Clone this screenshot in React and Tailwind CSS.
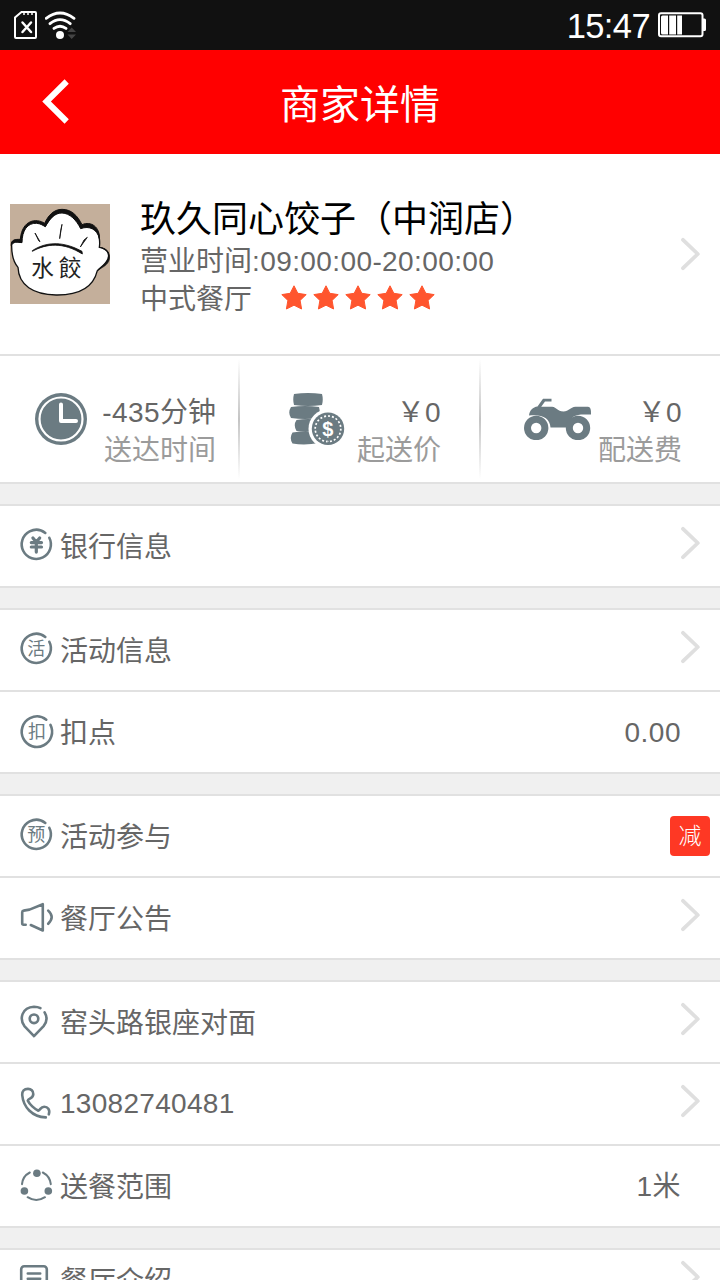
const INK = "#6b7b82";

function Chevron({ className = "" }) {
  return (
    <svg viewBox="0 0 22 36" className={`h-[36px] w-[22px] shrink-0 ${className}`} fill="none" stroke="#dfdfdf" strokeWidth="3.8" strokeLinecap="round" strokeLinejoin="round">
      <path d="M5 3.8 19.8 18 5 32.2" />
    </svg>
  );
}

function Icon({ children }) {
  return (
    <svg viewBox="0 0 34 34" className="h-[34px] w-[34px] shrink-0 overflow-visible" fill="none" stroke={INK} strokeWidth="2.6" strokeLinecap="round" strokeLinejoin="round">
      {children}
    </svg>
  );
}

function Ring({ cx = 16.3, cy = 15.4, r = 14.6, char }) {
  return (
    <Icon>
      <circle cx={cx} cy={cy} r={r} pathLength="360" strokeDasharray="335 25" transform={`rotate(-27 ${cx} ${cy})`} />
      {char ? (
        <text x={cx} y={cy + 6.6} textAnchor="middle" fontSize="18" fill={INK} stroke="none" style={{ fontFamily: '"Noto Sans CJK SC", sans-serif' }}>
          {char}
        </text>
      ) : (
        <path strokeWidth="3.2" d="M12.9 8.9l3.4 4.2 3.4-4.2M11.3 13.6h10.2M11.3 18h10.2M16.3 13.5v9.6" />
      )}
    </Icon>
  );
}

const icons = {
  bank: <Ring />,
  activity: <Ring char="活" />,
  deduct: <Ring cx={16.9} cy={16.7} r={15.2} char="扣" />,
  join: <Ring char="预" />,
  notice: (
    <Icon>
      <path d="M5.7 23.7H3.6Q2.2 23.7 2.2 22.3V11.2Q2.2 9.8 3.6 9.6L9.5 8.6 22.8 3.2V29.5L10.8 24M28.2 9.6Q35.2 16 28.2 22.8" />
    </Icon>
  ),
  place: (
    <Icon>
      <path d="M24.6 7.4C27.6 12.5 26.6 17.5 23.6 21.1L14 31.2 4.4 21.1C-.8 13.8 1.8 2.3 14 1.7Q17.8 1.7 20.4 3.2" />
      <circle cx="14" cy="13.8" r="4.3" />
    </Icon>
  ),
  phone: (
    <Icon>
      <path d="M28.8 27.3C30.4 22.5 27.6 19.7 24.2 19.7 20.6 19.7 20.7 22.5 18.4 23.7 14.5 22 9.5 17.3 7.8 13.6 8.4 11.2 13 12 13.3 7.2 13.4 3.8 11 1.9 8 1.9 4.2 1.9 2 4 2.2 8 3.3 20 12 29.8 25.8 30.4" />
    </Icon>
  ),
  range: (
    <Icon>
      <path strokeWidth="2" d="M2 15.2Q2.6 7.3 9.8 3.5M22.8 3.5Q30 7.3 30.8 15.2M7.6 28.2Q16.3 33.8 25 28.2" />
      <g fill={INK} stroke="none">
        <circle cx="16.9" cy="4.3" r="3.8" />
        <circle cx="4.4" cy="22" r="3.8" />
        <circle cx="28.3" cy="22" r="3.8" />
      </g>
    </Icon>
  ),
  intro: (
    <Icon>
      <rect x="1.2" y="3.2" width="25.6" height="27" rx="3" />
      <path d="M7.8 10.5h12.4M7.8 15.8h12.4M7.8 21.1h7" />
    </Icon>
  ),
};

function Row({ icon, label, phone, value, badge, arrow, short }) {
  return (
    <div className={`flex shrink-0 items-center bg-white pl-[20px] ${short ? "h-[60px]" : "h-[80px]"}`}>
      {icons[icon]}
      {phone ? (
        <span className="ml-[6px] flex-1 leading-[40px] tracking-[0.3px]">{phone}</span>
      ) : (
        <span className="ml-[6px] flex-1 pt-[4px] leading-[40px]">{label}</span>
      )}
      {value && <span className="mr-[39px] pt-[2px] leading-[40px] tracking-[0.5px]">{value}</span>}
      {badge && (
        <span className="mr-[10px] flex h-[40px] w-[40px] items-center justify-center rounded-[4px] bg-[#fe3824] text-[23px] font-light leading-[40px] text-white">
          {badge}
        </span>
      )}
      {arrow && <Chevron className="mr-[20px] mb-[6px]" />}
    </div>
  );
}

function Group({ children }) {
  return <section className="mb-[20px] flex shrink-0 flex-col gap-[2px] bg-[#e1e1e1] py-[2px]">{children}</section>;
}

function Stat({ icon, value, label, className }) {
  return (
    <div className={`flex h-full items-start justify-between ${className}`}>
      {icon}
      <div className="pt-[38px] text-right leading-[38px]">
        <p>{value}</p>
        <p className="tracking-normal text-[#9b9b9b]">{label}</p>
      </div>
    </div>
  );
}

const Divider = () => <div className="h-[120px] w-[2px] shrink-0 bg-linear-to-b from-white via-[#c4c4c4] to-white" />;

function Logo() {
  return (
    <svg viewBox="0 0 300 300" className="h-[100px] w-[100px] shrink-0">
      <rect width="300" height="300" fill="#c4af9b" />
      <path d="M5 117C8 108 20 112 34 115C34 80 50 54 76 54C90 54 98 60 106 66C120 40 134 24 156 24C182 24 202 44 214 70C240 58 268 74 268 104Q270 118 268 130C290 134 300 146 294 164C288 180 274 188 262 200C250 250 210 274 138 273C70 272 26 244 24 190C8 172 4 145 5 117Z" fill="#fff" stroke="#111" strokeWidth="4" strokeLinejoin="round" />
      <path d="M4 126C7 112 24 114 36 116C36 80 52 56 80 58C92 59 98 64 106 68C118 44 134 27 156 27C180 28 199 48 212 74C238 64 262 76 268 104C270 70 244 50 216 62C202 34 184 16 156 16C130 16 114 36 104 58C80 42 36 46 31 106C16 106 2 106 4 126Z" fill="#111" stroke="#111" strokeWidth="3" />
      <path d="M270 130C290 136 300 148 294 164C288 180 274 190 262 200C276 190 294 184 298 166C302 146 288 132 270 130Z" fill="#111" stroke="#111" strokeWidth="2" />
      <path d="M67 140C100 118 150 106 216 142L217 150C160 114 110 118 67 142ZM75 87L90 113 86 110ZM156 61L149 104 152 80ZM232 100L211 129 222 108Z" fill="#111" stroke="#111" strokeWidth="2.5" strokeLinejoin="round" />
      <text x="64" y="216" fontSize="68" fill="#222" textLength="150" lengthAdjust="spacing" style={{ fontFamily: '"Noto Sans CJK TC", sans-serif' }}>水餃</text>
    </svg>
  );
}

function Star() {
  return (
    <svg viewBox="0 0 26 25" className="h-[25px] w-[26px]" fill="#ff552e" stroke="#ff552e" strokeWidth="1" strokeLinejoin="round">
      <path d="M13 .8 16.8 8.3 25.2 9.6 19.1 15.4 20.6 24 13 20.2 5.4 24 6.9 15.4.8 9.6 9.2 8.3Z" />
    </svg>
  );
}

const Clock = (
  <svg viewBox="0 0 52 52" className="mt-[37px] h-[52px] w-[52px]" fill="none">
    <circle cx="26" cy="26" r="26" fill={INK} />
    <circle cx="26" cy="26" r="21.5" stroke="#fff" strokeWidth="2.2" />
    <path d="M26 11.5V28H41" stroke="#fff" strokeWidth="4" strokeLinecap="round" strokeLinejoin="round" />
  </svg>
);

const Coins = (
  <svg viewBox="0 0 58 52" className="mt-[37px] h-[52px] w-[58px]" fill={INK}>
    <path d="M6 1Q20 -1 34 1 35.5 6.500 34 12 20 14 6 12 4.500 6.500 6 1ZM3 14Q17 12 31 14 32.500 19.500 31 25 17 27 3 25 -.5 19.500 3 14ZM8.500 27Q20 25 31 27V37Q20 40 8.500 38 5 32 8.500 27ZM4.500 39.500Q17 37.500 31 39.500V50Q17 52.500 4.500 50.500 1 45 4.500 39.500Z" />
    <circle cx="40" cy="35.800" r="19.500" fill="#fff" />
    <circle cx="40" cy="35.800" r="16.200" />
    <circle cx="40" cy="35.800" r="12.800" fill="none" stroke="#fff" strokeWidth="1.700" pathLength="40" strokeDasharray="1 1" />
    <text x="40" y="43" textAnchor="middle" fontSize="20" fontWeight="700" fill="#fff" style={{ fontFamily: '"Liberation Sans", sans-serif' }}>$</text>
  </svg>
);

const Quad = (
  <svg viewBox="0 0 68 42" className="mt-[42px] h-[42px] w-[68px]" fill={INK}>
    <path d="M19 .8H27.500V3.400H21L17.200 8.700H28C33 9 33 13.500 39.500 13.500 45 13.500 46 9 51.500 8.700H64Q67.500 9 67 16.500H57C49 17 44 22 42.500 29.500H26.500C26 20 18 16 5 17.500 5.500 12 9 9 13.500 8.400Z" />
    <g fill="none" stroke={INK} strokeWidth="7">
      <circle cx="12.200" cy="30" r="8.700" />
      <circle cx="54" cy="30" r="8.700" />
    </g>
  </svg>
);

export default function App() {
  return (
    <div className="flex h-[1280px] w-[720px] flex-col overflow-hidden bg-[#f0f0f0] font-['Liberation_Sans','Noto_Sans_CJK_SC',sans-serif] text-[28px] text-[#666]">
      <div className="flex h-[50px] shrink-0 items-center justify-between bg-[#111] pl-[13px] pr-[14px] text-white">
        <div className="flex items-center gap-[7px]">
          <svg viewBox="0 0 25 30" className="h-[30px] w-[25px]" fill="none" stroke="#fff" strokeWidth="2">
            <path d="M8.500 2H22Q23 2 23 3V27Q23 28 22 28H3Q2 28 2 27V7.500Z" />
            <path d="M10 4h12" strokeWidth="1.500" strokeDasharray="2 2" />
            <path d="M9.500 12.500l8.500 9.500M18 12.500l-8.500 9.500" strokeWidth="2.500" strokeLinecap="round" />
          </svg>
          <svg viewBox="0 0 32 30" className="h-[30px] w-[32px]" fill="none" stroke="#fff" strokeWidth="2.800" strokeLinecap="round">
            <path d="M1.200 8.300Q15 -2.300 29 8.300M5 13.700Q15 5.500 25.200 13.700M9 18.400Q15 14 21 18.400" />
            <circle cx="15" cy="25" r="4" fill="#fff" stroke="none" />
            <path d="M22.500 22l4.200-4.500 4.300 4.500zM22.500 24.500h8.500l-4.300 4.500z" fill="#444" stroke="none" />
          </svg>
        </div>
        <div className="flex items-center gap-[8px]">
          <span className="pt-[2px] text-[34.500px] leading-[48px] tracking-[-0.6px]">15:47</span>
          <svg viewBox="0 0 48 26" className="h-[26px] w-[48px]" fill="#fff">
            <rect x="1" y="1.200" width="43.500" height="23" rx="2" fill="none" stroke="#fff" strokeWidth="2" />
            <path d="M3 5Q3 3.500 4.500 3.500H10V22.500H4.500Q3 22.500 3 21ZM11.200 3.500H18V22.500H11.200ZM19.200 3.500H24V22.500H19.200ZM45 6.500H46.500Q48 6.500 48 8V17.500Q48 19 46.500 19H45Z" />
          </svg>
        </div>
      </div>

      <header className="grid h-[104px] shrink-0 grid-cols-[100px_1fr_100px] items-center bg-[#f00] text-white">
        <svg viewBox="0 0 28 46" className="ml-[42px] h-[46px] w-[28px]" fill="none" stroke="#fff" strokeWidth="6">
          <path d="M24.700 2.500 4.500 22.500 24.700 42.500" />
        </svg>
        <h1 className="pt-[5px] text-center text-[40px] leading-[60px]">商家详情</h1>
      </header>

      <section className="flex h-[200px] shrink-0 items-center bg-white pl-[10px]">
        <Logo />
        <div className="ml-[30px] flex-1 pt-[7px] tracking-[0.4px]">
          <h2 className="text-[36px] leading-[46px] tracking-normal text-black">玖久同心饺子（中润店）</h2>
          <p className="leading-[38px]"><span className="tracking-normal">营业时间</span>:09:00:00-20:00:00</p>
          <div className="flex items-center">
            <span className="leading-[38px] tracking-normal">中式餐厅</span>
            <div className="mb-[4px] ml-[29px] flex gap-[6px]">
              <Star /><Star /><Star /><Star /><Star />
            </div>
          </div>
        </div>
        <Chevron className="mr-[20px]" />
      </section>

      <section className="mb-[20px] flex h-[130px] shrink-0 items-center border-y-2 border-[#e1e1e1] bg-white tracking-[0.4px]">
        <Stat className="w-[238px] pl-[35px] pr-[22px]" icon={Clock} value={<>-435<span className="tracking-normal">分钟</span></>} label="送达时间" />
        <Divider />
        <Stat className="w-[239px] pl-[48px] pr-[38px]" icon={Coins} value="￥0" label="起送价" />
        <Divider />
        <Stat className="w-[239px] pl-[43px] pr-[38px]" icon={Quad} value="￥0" label="配送费" />
      </section>

      <Group>
        <Row icon="bank" label="银行信息" arrow />
      </Group>
      <Group>
        <Row icon="activity" label="活动信息" arrow />
        <Row icon="deduct" label="扣点" value="0.00" />
      </Group>
      <Group>
        <Row icon="join" label="活动参与" badge="减" />
        <Row icon="notice" label="餐厅公告" arrow />
      </Group>
      <Group>
        <Row icon="place" label="窑头路银座对面" arrow />
        <Row icon="phone" phone="13082740481" arrow />
        <Row icon="range" label="送餐范围" value="1米" />
      </Group>
      <Group>
        <Row icon="intro" label="餐厅介绍" arrow short />
      </Group>
    </div>
  );
}
